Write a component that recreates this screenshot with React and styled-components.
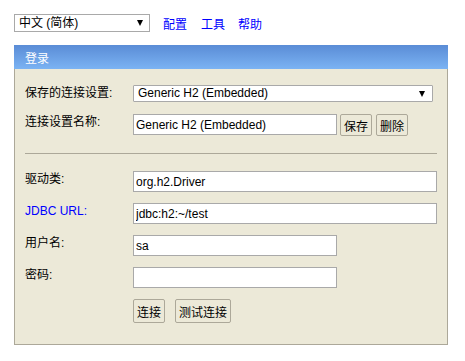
import React from "react";
import styled, { createGlobalStyle } from "styled-components";

const GlobalStyle = createGlobalStyle`
  body {
    margin: 0;
    background: #ffffff;
    font-family: "Liberation Sans", Arial, "Noto Sans CJK SC", sans-serif;
    font-size: 12px;
    color: #000000;
  }
`;

const Page = styled.div`
  padding: 14px;
`;

const TopBar = styled.div`
  display: flex;
  align-items: center;
  height: 18px;
`;

const LangSelect = styled.div`
  position: relative;
  width: 136px;
  height: 18px;
  box-sizing: border-box;
  border: 1px solid #a9a9a9;
  background: #ffffff;
  display: flex;
  align-items: center;
  padding-left: 4px;
  line-height: 16px;
`;

const Arrow = styled.span`
  position: absolute;
  right: ${({ right }) => right || "6px"};
  top: 50%;
  transform: translateY(-50%);
  width: 0;
  height: 0;
  border-left: 3px solid transparent;
  border-right: 3px solid transparent;
  border-top: 6px solid #000000;
`;

const NavLink = styled.a`
  color: #0000ff;
  text-decoration: none;
  margin-left: ${({ gap }) => gap || "14px"};
  cursor: pointer;
`;

const Panel = styled.div`
  margin-top: 13px;
  width: 434px;
  box-sizing: border-box;
  border: 1px solid #aca899;
  border-top: none;
  background: #ece9d8;
`;

const PanelHeader = styled.div`
  height: 24px;
  margin: 0 -1px;
  padding-left: 11px;
  display: flex;
  align-items: center;
  color: #ffffff;
  background: linear-gradient(to bottom, #5a8cd6, #7bb3f3);
`;

const PanelBody = styled.div`
  padding: 16px 10px 21px 10px;
`;

const Row = styled.div`
  display: flex;
  align-items: flex-start;
  margin-bottom: ${({ mb }) => mb || "11px"};
`;

const Label = styled.div`
  width: 108px;
  flex-shrink: 0;
  line-height: 16px;
  color: ${({ link }) => (link ? "#0000ff" : "#000000")};
`;

const SelectBox = styled.div`
  position: relative;
  width: 300px;
  height: 17px;
  box-sizing: border-box;
  border: 1px solid #a9a9a9;
  border-radius: 1px;
  background: #ffffff;
  padding-left: 4px;
  line-height: 15px;
`;

const TextInput = styled.input`
  width: ${({ w }) => w || "204px"};
  height: 21px;
  box-sizing: border-box;
  border: 1px solid #a9a9a9;
  background: #ffffff;
  padding: 0 2px;
  margin: 0;
  font-family: inherit;
  font-size: 12px;
  color: #000000;
  outline: none;
`;

const Button = styled.button`
  height: ${({ h }) => h || "22px"};
  box-sizing: border-box;
  margin: 0 0 0 ${({ ml }) => ml || "0"};
  padding: 0 3px;
  border: 1px solid #aca899;
  border-radius: 2px;
  background: #ece9d8;
  font-family: inherit;
  font-size: 12px;
  color: #000000;
`;

const Divider = styled.div`
  height: 1px;
  background: #aca899;
  margin: 17px 0 17px 0;
`;

export default function App() {
  return (
    <>
      <GlobalStyle />
      <Page>
        <TopBar>
          <LangSelect>
            中文 (简体)
            <Arrow />
          </LangSelect>
          <NavLink gap="13px">配置</NavLink>
          <NavLink>工具</NavLink>
          <NavLink gap="13px">帮助</NavLink>
        </TopBar>

        <Panel>
          <PanelHeader>登录</PanelHeader>
          <PanelBody>
            <Row mb="12px">
              <Label>保存的连接设置:</Label>
              <SelectBox>
                Generic H2 (Embedded)
                <Arrow right="7px" />
              </SelectBox>
            </Row>
            <Row mb="0">
              <Label>连接设置名称:</Label>
              <TextInput defaultValue="Generic H2 (Embedded)" />
              <Button ml="3px">保存</Button>
              <Button ml="4px">删除</Button>
            </Row>

            <Divider />

            <Row>
              <Label>驱动类:</Label>
              <TextInput w="304px" defaultValue="org.h2.Driver" />
            </Row>
            <Row>
              <Label link>JDBC URL:</Label>
              <TextInput w="304px" defaultValue="jdbc:h2:~/test" />
            </Row>
            <Row>
              <Label>用户名:</Label>
              <TextInput defaultValue="sa" />
            </Row>
            <Row>
              <Label>密码:</Label>
              <TextInput type="password" defaultValue="" />
            </Row>
            <Row mb="0">
              <Label />
              <Button h="24px">连接</Button>
              <Button h="24px" ml="10px">测试连接</Button>
            </Row>
          </PanelBody>
        </Panel>
      </Page>
    </>
  );
}
